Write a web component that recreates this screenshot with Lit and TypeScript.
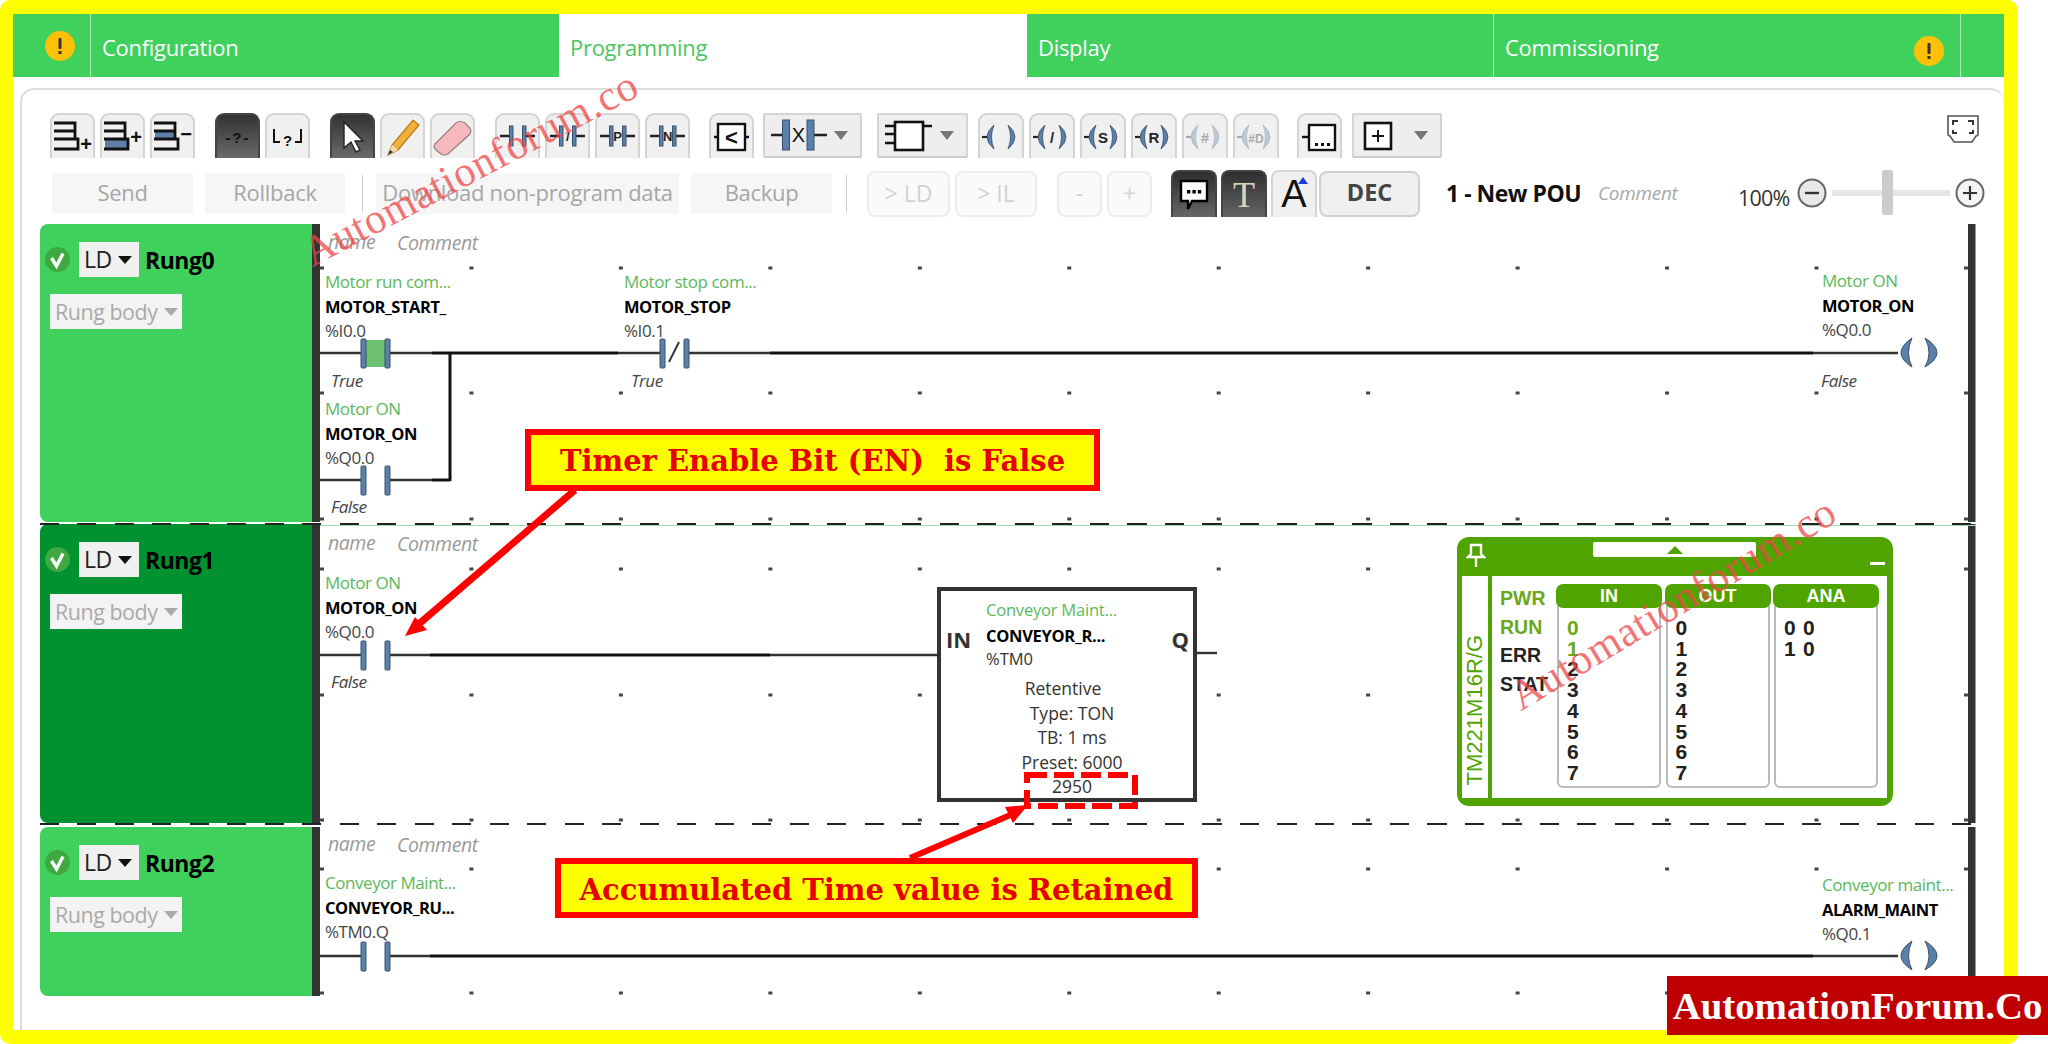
import { LitElement, css, html, svg } from "lit";
import { customElement, property } from "lit/decorators.js";

const X0 = 320;
const BLUE = "#5b80aa";
const EDGE = "#3c5068";

type Label = { x: number; y: number; text: string; cls: string };
type Seg = [number, number, number, number, boolean?];
type Part = { kind: "contact" | "closed" | "nc" | "coil"; x: number; wire: number };
type RungData = {
  name: string;
  dark?: boolean;
  top: number;
  height: number;
  gap: number;
  dots: number[];
  wires: Seg[];
  parts: Part[];
  labels: Label[];
};

// text block above an element on the ladder: comment, symbol, address
const tag = (x: number, y: number, c: string, s: string, a: string): Label[] => [
  { x, y, text: c, cls: "cmt" },
  { x, y: y + 25, text: s, cls: "sym" },
  { x, y: y + 49, text: a, cls: "adr" },
];

const meta = (y: number): Label[] => [
  { x: 328, y, text: "name", cls: "meta" },
  { x: 397, y: y + 1, text: "Comment", cls: "meta" },
];

const RUNGS: RungData[] = [
  {
    name: "Rung0",
    top: 224,
    height: 298,
    gap: 2,
    dots: [268, 393, 519],
    wires: [
      [320, 353, 361, 353],
      [390, 353, 432, 353],
      [432, 353, 618, 353, true],
      [618, 353, 660, 353],
      [688, 353, 770, 353],
      [770, 353, 1813, 353, true],
      [1813, 353, 1898, 353],
      [320, 480, 361, 480],
      [390, 480, 432, 480],
      [432, 480, 450, 480, true],
      [450, 353, 450, 481, true],
    ],
    parts: [
      { kind: "closed", x: 361, wire: 353 },
      { kind: "nc", x: 660, wire: 353 },
      { kind: "contact", x: 361, wire: 480 },
      { kind: "coil", x: 1898, wire: 353 },
    ],
    labels: [
      ...meta(242),
      ...tag(325, 282, "Motor run com...", "MOTOR_START_", "%I0.0"),
      ...tag(624, 282, "Motor stop com...", "MOTOR_STOP", "%I0.1"),
      ...tag(325, 409, "Motor ON", "MOTOR_ON", "%Q0.0"),
      ...tag(1822, 281, "Motor ON", "MOTOR_ON", "%Q0.0"),
      { x: 331, y: 381, text: "True", cls: "val" },
      { x: 631, y: 381, text: "True", cls: "val" },
      { x: 331, y: 507, text: "False", cls: "val" },
      { x: 1821, y: 381, text: "False", cls: "val" },
    ],
  },
  {
    name: "Rung1",
    dark: true,
    top: 524,
    height: 299,
    gap: 4,
    dots: [569, 695, 820],
    wires: [
      [320, 655, 361, 655],
      [390, 655, 430, 655],
      [430, 655, 770, 655, true],
      [770, 655, 937, 655],
      [1197, 653, 1217, 653],
    ],
    parts: [{ kind: "contact", x: 361, wire: 655 }],
    labels: [
      ...meta(543),
      ...tag(325, 583, "Motor ON", "MOTOR_ON", "%Q0.0"),
      { x: 331, y: 682, text: "False", cls: "val" },
    ],
  },
  {
    name: "Rung2",
    top: 827,
    height: 169,
    gap: 0,
    dots: [869, 993],
    wires: [
      [320, 956, 361, 956],
      [390, 956, 430, 956],
      [430, 956, 1813, 956, true],
      [1813, 956, 1898, 956],
    ],
    parts: [
      { kind: "contact", x: 361, wire: 956 },
      { kind: "coil", x: 1898, wire: 956 },
    ],
    labels: [
      ...meta(844),
      ...tag(325, 883, "Conveyor Maint...", "CONVEYOR_RU...", "%TM0.Q"),
      ...tag(1822, 885, "Conveyor maint...", "ALARM_MAINT", "%Q0.1"),
    ],
  },
];

@customElement("ld-rung")
export class LdRung extends LitElement {
  @property({ attribute: false }) data!: RungData;

  renderPart(p: Part) {
    const y = p.wire;
    if (p.kind === "coil") {
      return svg`
        <path d="M${p.x + 14} ${y - 15} Q${p.x - 8} ${y} ${p.x + 14} ${y + 14} Q${p.x + 7} ${y} ${p.x + 14} ${y - 15}Z" fill=${BLUE} stroke=${EDGE} stroke-width="1"/>
        <path d="M${p.x + 27} ${y - 15} Q${p.x + 51} ${y} ${p.x + 27} ${y + 14} Q${p.x + 35} ${y} ${p.x + 27} ${y - 15}Z" fill=${BLUE} stroke=${EDGE} stroke-width="1"/>`;
    }
    return svg`
      ${p.kind === "closed" ? svg`<rect x=${p.x + 4} y=${y - 13} width="22" height="27" fill="#6cc070"/>` : ""}
      <rect x=${p.x} y=${y - 14} width="5" height="29" rx="1" fill=${BLUE} stroke=${EDGE} stroke-width="1"/>
      <rect x=${p.x + 24} y=${y - 14} width="5" height="29" rx="1" fill=${BLUE} stroke=${EDGE} stroke-width="1"/>
      ${p.kind === "nc" ? svg`<path d="M${p.x + 9} ${y + 9} L${p.x + 19} ${y - 11}" stroke="#333" stroke-width="2"/>` : ""}`;
  }

  render() {
    const d = this.data;
    const dotXs = Array.from({ length: 12 }, (_, i) => X0 + i * 149.45);
    return html`
      <div class="rung ${d.dark ? "dark" : ""}" style="height:${d.height}px;margin-bottom:${d.gap}px">
        <div class="head">
          <div class="top-line">
            <svg class="ok" width="25" height="25" viewBox="0 0 25 25">
              <circle cx="12.5" cy="12.5" r="12.5" fill="#3fa83f"/>
              <path d="M6.5 11 L11.5 19 L18 6.5" fill="none" stroke="#fff" stroke-width="3.4"/>
            </svg>
            <div class="ld">LD<span class="caret black"></span></div>
            <b class="rname">${d.name}</b>
          </div>
          <div class="body-sel">Rung body<span class="caret"></span></div>
        </div>
        <div class="rail"></div>
        <div class="canvas">
          <svg class="ink" width="1648" height=${d.height} viewBox="${X0} ${d.top} 1648 ${d.height}">
            ${d.dots.map((y) => dotXs.map((x) => svg`<rect x=${x} y=${y - 1.5} width="4" height="3" fill="#444"/>`))}
            ${d.wires.map(
              ([a, b, c, e, strong]) =>
                svg`<line x1=${a} y1=${b} x2=${c} y2=${e} stroke=${strong ? "#111" : "#333"} stroke-width=${strong ? 3 : 2.4}/>`
            )}
            ${d.parts.map((p) => this.renderPart(p))}
          </svg>
          ${d.labels.map(
            (l) => html`<div class="lbl ${l.cls}" style="left:${l.x - X0}px;top:${l.y - d.top - 11}px">${l.text}</div>`
          )}
          <slot></slot>
        </div>
        <div class="rail end"></div>
      </div>
    `;
  }

  static styles = css`
    :host { display: block; }
    .rung { display: flex; }
    .head {
      width: 272px;
      box-sizing: border-box;
      background: #40d05c;
      border-radius: 8px 0 0 8px;
      padding: 18px 0 0 4px;
    }
    .dark .head { background: #009130; }
    .top-line { display: flex; align-items: center; height: 35px; }
    .ok { margin-left: 1px; }
    .ld {
      margin-left: 9px;
      width: 60px;
      height: 35px;
      box-sizing: border-box;
      padding-left: 5px;
      background: #f0f0f0;
      font: 23px/35px "Open Sans", sans-serif;
      letter-spacing: -0.6px;
      color: #222;
      display: flex;
      align-items: center;
      gap: 6px;
    }
    .rname { margin-left: 6px; font: 700 23px "Open Sans", sans-serif; letter-spacing: -0.5px; color: #000; }
    .body-sel {
      margin: 17px 0 0 6px;
      width: 132px;
      height: 35px;
      box-sizing: border-box;
      padding-left: 5px;
      background: #f3f3f3;
      color: #aaa;
      font: 21.5px/35px "Open Sans", sans-serif;
      letter-spacing: -0.5px;
      display: flex;
      align-items: center;
      gap: 7px;
      white-space: nowrap;
    }
    .caret { width: 0; height: 0; flex: none; border: 7px solid transparent; border-top: 8px solid #aaa; border-bottom: 0; }
    .caret.black { border-top-color: #111; }
    .rail { width: 8px; background: #333; flex: none; box-sizing: border-box; }
    .rail.end { border-right: 1px solid #40d05c; }
    .canvas { position: relative; flex: 1; height: 100%; }
    .ink { position: absolute; left: 0; top: 0; }
    .lbl { position: absolute; font: 17px/22px "Open Sans", sans-serif; white-space: nowrap; letter-spacing: -0.45px; }
    .cmt { color: #5cb85c; }
    .sym { color: #000; font-weight: 700; font-size: 16.5px; }
    .adr { color: #444; }
    .val { color: #444; font-style: italic; }
    .meta { color: #9a9a9a; font-style: italic; font-size: 19.5px; }
  `;
}

@customElement("plc-widget")
export class PlcWidget extends LitElement {
  render() {
    const digits = [0, 1, 2, 3, 4, 5, 6, 7];
    return html`
      <div class="w-head">
        <svg class="pin" width="20" height="26" viewBox="0 0 20 26">
          <path d="M5 2h10v9l3 3H2l3-3Z M10 14v10" fill="none" stroke="#fff" stroke-width="2.4"/>
        </svg>
        <div class="pill"><span class="tri"></span></div>
        <div class="minus"></div>
      </div>
      <div class="w-body">
        <div class="side"><span>TM221M16R/G</span></div>
        <div class="main">
          <div class="leds">
            <span class="on">PWR</span><span class="on">RUN</span><span>ERR</span><span>STAT</span>
          </div>
          <div class="col">
            <div class="cap">IN</div>
            <div class="box">${digits.map((d) => html`<div class=${d < 2 ? "on" : ""}>${d}</div>`)}</div>
          </div>
          <div class="col">
            <div class="cap">OUT</div>
            <div class="box">${digits.map((d) => html`<div>${d}</div>`)}</div>
          </div>
          <div class="col">
            <div class="cap">ANA</div>
            <div class="box pairs"><div>0&nbsp;0</div><div>1&nbsp;0</div></div>
          </div>
        </div>
      </div>
    `;
  }

  static styles = css`
    :host {
      position: absolute;
      left: 1457px;
      top: 537px;
      width: 436px;
      height: 269px;
      box-sizing: border-box;
      background: #50a400;
      border-radius: 12px;
      padding: 0 6px 8px 5px;
      display: flex;
      flex-direction: column;
      font-family: "Liberation Sans", sans-serif;
    }
    .w-head { position: relative; height: 39px; flex: none; }
    .pin { position: absolute; left: 4px; top: 6px; }
    .pill {
      position: absolute;
      left: 131px;
      top: 5px;
      width: 163px;
      height: 15px;
      background: #fff;
      border-radius: 2px;
      display: flex;
      justify-content: center;
      align-items: center;
    }
    .tri { width: 0; height: 0; border: 8px solid transparent; border-bottom: 8px solid #50a400; border-top: 0; }
    .minus { position: absolute; right: 2px; top: 25px; width: 15px; height: 2.5px; background: #fff; }
    .w-body { flex: 1; display: flex; gap: 4px; }
    .side { width: 26px; background: #fff; display: flex; align-items: flex-end; justify-content: center; }
    .side span {
      writing-mode: vertical-rl;
      transform: rotate(180deg);
      color: #50a400;
      font-size: 22px;
      margin-bottom: 13px;
      line-height: 26px;
    }
    .main { flex: 1; background: #fff; display: flex; gap: 2.5px; padding: 8px 6px 10px 8px; }
    .leds { width: 53.5px; flex: none; display: flex; flex-direction: column; font: 700 19.5px/28.5px "Liberation Sans", sans-serif; color: #222; white-space: nowrap; }
    .on { color: #6aa81c; }
    .col { width: 106px; flex: none; display: flex; flex-direction: column; position: relative; }
    .cap {
      height: 24px;
      background: #50a400;
      color: #fff;
      border-radius: 7px;
      text-align: center;
      font: 700 18px/24px "Liberation Sans", sans-serif;
      position: relative;
    }
    .box {
      flex: 1;
      margin: -2px 1px 0;
      border: 2px solid #bbb;
      border-top: 0;
      border-radius: 0 0 6px 6px;
      padding: 12px 0 0 8px;
      font: 700 21px/20.7px "Liberation Sans", sans-serif;
      color: #222;
    }
    .pairs { word-spacing: 1.5px; }
  `;
}

const rungGlyph = (row: number, sign: string, signY: number) => svg`
  ${row === 1 ? svg`<rect x="5" y="18" width="20" height="7" fill=${BLUE}/>` : ""}
  ${row === 2 ? svg`<rect x="5" y="26" width="22" height="9" fill=${BLUE}/>` : ""}
  <path d="M4 9H25V25M4 17H25M4 25H28V35H4" fill="none" stroke="#111" stroke-width="2.8"/>
  <text x="36" y=${signY} text-anchor="middle" font-family="Liberation Sans" font-weight="700" font-size="20" fill="#111">${sign}</text>`;

const contactGlyph = (mark: string) => svg`
  <path d="M5 22H15M31 22H40" stroke="#222" stroke-width="2.4"/>
  <rect x="14.500" y="12" width="3.500" height="20" fill=${BLUE} stroke=${EDGE}/>
  <rect x="27.500" y="12" width="3.500" height="20" fill=${BLUE} stroke=${EDGE}/>
  <text x="22.700" y="27" text-anchor="middle" font-family="Liberation Sans" font-weight="700" font-size="13" fill="#222">${mark}</text>`;

const coilGlyph = (mark: string, faded = false) => svg`
  <g opacity=${faded ? 0.35 : 1}>
    <path d="M4 23H10" stroke="#222" stroke-width="2.2"/>
    <path d="M16 11Q2 23 16 35Q11 23 16 11Z M30 11Q44 23 30 35Q35 23 30 11Z" fill=${BLUE} stroke=${EDGE} stroke-width="0.8"/>
    <text x="23" y="29" text-anchor="middle" font-family="Liberation Sans" font-weight="700" font-size=${mark.length > 1 ? 12 : 15} fill="#222">${mark}</text>
  </g>`;

type Tool = { w: number; icon: unknown; dark?: boolean; caret?: boolean; gap?: string };

const TOOLS: Tool[] = [
  { w: 45, icon: rungGlyph(0, "+", 37) },
  { w: 45, icon: rungGlyph(2, "+", 30) },
  { w: 45, icon: rungGlyph(1, "−", 27) },
  { w: 45, dark: true, gap: "g20", icon: svg`<text x="22" y="29" text-anchor="middle" font-family="Liberation Mono" font-weight="700" font-size="15" fill="#111">-?-</text>` },
  { w: 45, icon: svg`<path d="M9 15V28H15M36 15V28H30" fill="none" stroke="#111" stroke-width="2"/><text x="22.500" y="32" text-anchor="middle" font-family="Liberation Sans" font-weight="700" font-size="15" fill="#111">?</text>` },
  { w: 45, dark: true, gap: "g20", icon: svg`<path d="M14 8V34L21 28L26 38L30 36L25 27H33Z" fill="#fff" stroke="#222" stroke-width="1.4"/>` },
  { w: 45, icon: svg`<path d="M8 41L12 31L33 6L39 11L18 36Z" fill="#f0b03c" stroke="#b57a18" stroke-width="1.2"/><path d="M8 41L12 31L18 36Z" fill="#f4dcb0"/><path d="M8 41L10 36L13 38Z" fill="#333"/>` },
  { w: 45, icon: svg`<path d="M5 30L26 9Q30 6 35 9L40 14Q42 18 39 21L18 40Q14 42 11 40L6 36Q3 33 5 30Z" fill="#f6b9bc" stroke="#9a7a7a" stroke-width="1.2"/>` },
  { w: 45, gap: "g20", icon: contactGlyph("") },
  { w: 45, icon: contactGlyph("/") },
  { w: 45, icon: contactGlyph("P") },
  { w: 45, icon: contactGlyph("N") },
  { w: 45, gap: "g19", icon: svg`<rect x="9" y="10" width="27" height="26" fill="#fff" stroke="#111" stroke-width="2.4"/><path d="M5 23H9M36 23H40" stroke="#111" stroke-width="2.4"/><text x="22.500" y="31" text-anchor="middle" font-family="Liberation Sans" font-weight="700" font-size="22" fill="#111">&lt;</text>` },
  { w: 99, gap: "g9", caret: true, icon: svg`<path d="M8 22H20M50 22H64" stroke="#222" stroke-width="2.6"/><rect x="19.500" y="7" width="7" height="30" fill=${BLUE} stroke=${EDGE}/><rect x="44" y="7" width="7" height="30" fill=${BLUE} stroke=${EDGE}/><text x="35.500" y="29" text-anchor="middle" font-family="Liberation Sans" font-size="20" fill="#111">X</text>` },
  { w: 91, gap: "g15", caret: true, icon: svg`<rect x="18" y="9" width="28" height="28" fill="#fff" stroke="#111" stroke-width="2.6"/><path d="M8 13H18M8 21H18M8 30H18M46 13H55" stroke="#111" stroke-width="2.6"/>` },
  { w: 46, gap: "g10", icon: coilGlyph("") },
  { w: 46, icon: coilGlyph("/") },
  { w: 46, icon: coilGlyph("S") },
  { w: 46, icon: coilGlyph("R") },
  { w: 46, icon: coilGlyph("#", true) },
  { w: 46, icon: coilGlyph("#D", true) },
  { w: 45, gap: "g18", icon: svg`<rect x="12" y="11" width="26" height="25" fill="#fff" stroke="#111" stroke-width="2.4"/><path d="M5 23H12" stroke="#111" stroke-width="2.4"/><path d="M18 29h3v3h-3zM24 29h3v3h-3zM30 29h3v3h-3z" fill="#111"/>` },
  { w: 90, gap: "g10", caret: true, icon: svg`<rect x="13" y="10" width="26" height="26" fill="#fff" stroke="#111" stroke-width="2.6"/><path d="M26 17V29M20 23H32" stroke="#111" stroke-width="2"/>` },
];

@customElement("app-root")
export class AppRoot extends LitElement {
  warn() {
    return html`<svg class="warn" width="30" height="30" viewBox="0 0 30 30">
      <circle cx="15" cy="15" r="15" fill="#ffc107"/>
      <rect x="13.500" y="7" width="3" height="11" rx="1" fill="#333"/>
      <rect x="13.500" y="20" width="3" height="3" fill="#333"/>
    </svg>`;
  }

  renderTool(t: Tool) {
    return html`<div class="tool ${t.dark ? "dark" : ""} ${t.caret ? "wide" : ""} ${t.gap ?? ""}" style="width:${t.w}px">
      <svg width=${t.caret ? t.w - 30 : t.w} height="45" viewBox="0 0 ${t.caret ? t.w - 30 : t.w} 45">${t.icon}</svg>
      ${t.caret ? html`<span class="t-caret"></span>` : ""}
    </div>`;
  }

  render() {
    return html`
      <div class="frame">
        <nav class="tabs">
          <div class="tab-warn">${this.warn()}</div>
          <div class="tab first">Configuration</div>
          <div class="tab active">Programming</div>
          <div class="tab mid">Display</div>
          <div class="tab last">Commissioning ${this.warn()}</div>
          <div class="tab-end"></div>
        </nav>
        <section class="panel">
          <div class="tools">
            ${TOOLS.map((t) => this.renderTool(t))}
            <svg class="full" width="32" height="28" viewBox="0 0 32 28">
              <path d="M1 1H31V19Q31 21 29 21L25 27H7L3 21Q1 21 1 19Z" fill="none" stroke="#555" stroke-width="1.6"/>
              <path d="M6 10V6H11M21 6H26V10M6 15V18H10M26 15V18H22" fill="none" stroke="#333" stroke-width="2"/>
            </svg>
          </div>
          <div class="actions">
            <div class="act w141">Send</div>
            <div class="act w140 m12">Rollback</div>
            <div class="sep s1"></div>
            <div class="act w303">Download non-program data</div>
            <div class="act w141 m12">Backup</div>
            <div class="sep s2"></div>
            <div class="ghost w83">&gt; LD</div>
            <div class="ghost w82 m5">&gt; IL</div>
            <div class="ghost w45 m20">-</div>
            <div class="ghost w45 m5">+</div>
            <div class="tog dark m19">
              <svg width="32" height="34" viewBox="0 0 32 34">
                <path d="M3 3H29V23H14L10 31V23H3Z" fill="#fff" stroke="#000" stroke-width="2.4"/>
                <path d="M9 12h3.4v3.4H9zM14.400 12h3.4v3.400h-3.400zM19.800 12h3.4v3.400h-3.400z" fill="#000"/>
              </svg>
            </div>
            <div class="tog dark m4 serif-t">T</div>
            <div class="tog m4 big-a">A<span class="a-tri"></span></div>
            <div class="dec">DEC</div>
            <div class="pou">1 - New POU</div>
            <div class="pou-c">Comment</div>
            <div class="pct">100%</div>
            <svg class="zoom" width="30" height="30" viewBox="0 0 30 30">
              <circle cx="15" cy="15" r="13.500" fill="#e8e8e8" stroke="#666" stroke-width="2"/><path d="M8 15H22" stroke="#333" stroke-width="2.4"/>
            </svg>
            <div class="slider"><div class="thumb"></div></div>
            <svg class="zoom" width="30" height="30" viewBox="0 0 30 30">
              <circle cx="15" cy="15" r="13.500" fill="#f4f4f4" stroke="#666" stroke-width="2"/><path d="M8 15H22M15 8V22" stroke="#333" stroke-width="2.2"/>
            </svg>
          </div>
          <div class="rungs">
            <ld-rung .data=${RUNGS[0]}></ld-rung>
            <ld-rung .data=${RUNGS[1]}>
              <div class="timer">
                <div class="pin-l">IN</div>
                <div class="pin-r">Q</div>
                <div class="t-cmt">Conveyor Maint...</div>
                <div class="t-sym">CONVEYOR_R...</div>
                <div class="t-adr">%TM0</div>
                <div class="t-p first-p">Retentive</div>
                <div class="t-p">Type: TON</div>
                <div class="t-p">TB: 1 ms</div>
                <div class="t-p">Preset: 6000</div>
                <div class="t-p">2950</div>
              </div>
            </ld-rung>
            <ld-rung .data=${RUNGS[2]}></ld-rung>
          </div>
        </section>
      </div>

      <div class="dash d1"></div>
      <div class="dash d2"></div>
      <div class="hair"></div>
      <plc-widget></plc-widget>

      <svg class="over" width="2048" height="1044" viewBox="0 0 2048 1044">
        <line x1="575" y1="490" x2="420" y2="623" stroke="#f00" stroke-width="7"/>
        <polygon points="405,636 415,617 427,630" fill="#f00"/>
        <line x1="910" y1="858" x2="1015" y2="813" stroke="#f00" stroke-width="6"/>
        <polygon points="1028,805 1005,807 1013,823" fill="#f00"/>
        <rect x="1027" y="775" width="108" height="31" fill="none" stroke="#f00" stroke-width="6" stroke-dasharray="20 7"/>
      </svg>
      <div class="call c1">Timer Enable Bit (EN)  is False</div>
      <div class="call c2">Accumulated Time value is Retained</div>
      <div class="mark m1">Automationforum.co</div>
      <div class="mark m2">Automationforum.co</div>
      <div class="brand">AutomationForum.Co</div>
    `;
  }

  static styles = css`
    :host {
      display: block;
      position: relative;
      width: 2048px;
      height: 1044px;
      overflow: hidden;
      background: #fff;
      font-family: "Open Sans", sans-serif;
    }
    .frame {
      width: 2018px;
      height: 1044px;
      box-sizing: border-box;
      border: solid #ffff00;
      border-width: 14px 14px 14px 13px;
      border-radius: 10px;
      background: #fff;
      display: flex;
      flex-direction: column;
    }
    .tabs { display: flex; height: 63px; flex: none; background: #40d05c; color: #fff; font-size: 22px; letter-spacing: -0.3px; }
    .tab-warn { width: 78px; display: flex; align-items: center; justify-content: center; padding: 0 0 0 16px; box-sizing: border-box; border-right: 1.5px solid #a8eab6; }
    .tab { box-sizing: border-box; display: flex; align-items: center; padding: 3px 0 0 11px; }
    .first { width: 468px; }
    .active { width: 468px; background: #fff; color: #4cc563; }
    .mid { width: 467px; border-right: 1.5px solid #a8eab6; }
    .last { width: 467px; border-right: 1.5px solid #a8eab6; position: relative; }
    .last .warn { position: absolute; right: 16px; top: 22px; }
    .tab-end { flex: 1; }
    .panel {
      flex: 1;
      margin: 11px 0 0 7px;
      border: solid #ddd;
      border-width: 2px 0 0 2px;
      border-radius: 14px 14px 0 0;
      padding: 23px 0 0 28px;
      display: flex;
      flex-direction: column;
      position: relative;
    }
    .tools { display: flex; gap: 5px; height: 45px; }
    .tool {
      box-sizing: border-box;
      height: 45px;
      flex: none;
      background: #f0f0f0;
      border: 2px solid #d4d4d4;
      border-bottom: 0;
      border-radius: 9px 9px 0 0;
      display: flex;
      align-items: center;
      position: relative;
    }
    .tool svg { margin: -2px; flex: none; }
    .tool.wide { border-bottom: 2px solid #ccc; border-radius: 2px; background: #eee; }
    .tool.dark { background: linear-gradient(#333, #6a6a6a); border-color: #444; }
    .t-caret { margin-left: 4px; width: 0; height: 0; border: 7px solid transparent; border-top: 9px solid #777; border-bottom: 0; }
    .g9 { margin-left: 4px; }
    .g10 { margin-left: 5px; }
    .g15 { margin-left: 10px; }
    .g18 { margin-left: 13px; }
    .g19 { margin-left: 14px; }
    .g20 { margin-left: 15px; }
    .full { position: absolute; left: 1925px; top: 25px; }
    .actions { display: flex; align-items: center; height: 47px; margin: 12px 0 0 2px; }
    .act { height: 41px; background: #f6f6f6; color: #a6a6a6; font-size: 22px; letter-spacing: -0.3px; display: flex; align-items: center; justify-content: center; flex: none; padding-bottom: 3px; box-sizing: border-box; white-space: nowrap; }
    .w141 { width: 141px; }
    .w140 { width: 140px; }
    .w303 { width: 303px; }
    .w83 { width: 83px; }
    .w82 { width: 82px; }
    .w45 { width: 45px; }
    .m4 { margin-left: 4px; }
    .m5 { margin-left: 5px; }
    .m12 { margin-left: 12px; }
    .m19 { margin-left: 19px; }
    .m20 { margin-left: 20px; }
    .sep { width: 1px; height: 38px; background: #ccc; flex: none; }
    .s1 { margin: 0 13px 0 17px; }
    .s2 { margin: 0 20px 0 14px; }
    .ghost { box-sizing: border-box; height: 46px; padding-bottom: 2px; border: 2px solid #ececec; border-radius: 8px; background: #fafafa; color: #d2d2d2; font-size: 23px; display: flex; align-items: center; justify-content: center; flex: none; }
    .tog { box-sizing: border-box; width: 46px; height: 47px; flex: none; display: flex; align-items: center; justify-content: center; background: #f0f0f0; border: 2px solid #d4d4d4; border-bottom: 0; border-radius: 8px 8px 0 0; position: relative; }
    .tog.dark { background: linear-gradient(#2e2e2e, #666); border-color: #444; }
    .serif-t { font: 36px "Liberation Serif", serif; color: #e2d2b4; text-shadow: 1px 0 0 #2b4a6a; }
    .big-a { font: 38px "Liberation Sans", sans-serif; color: #111; }
    .a-tri { position: absolute; right: 7px; top: 5px; width: 0; height: 0; border: 5px solid transparent; border-bottom: 7px solid #1a3fd0; border-top: 0; }
    .dec { box-sizing: border-box; width: 101px; height: 46px; padding-bottom: 4px; margin-left: 2px; flex: none; border: 2px solid #d0d0d0; border-radius: 8px; background: #f0f0f0; color: #444; font: 700 23.5px "Open Sans", sans-serif; display: flex; align-items: center; justify-content: center; }
    .pou { margin: -2px 0 0 26px; width: 152px; flex: none; font-weight: 700; font-size: 23px; letter-spacing: -0.5px; color: #111; white-space: nowrap; }
    .pou-c { width: 140px; flex: none; font-style: italic; font-size: 19px; color: #a8a8a8; letter-spacing: -0.3px; margin-top: -2px; }
    .pct { width: 59px; flex: none; font-size: 21.5px; letter-spacing: -0.8px; color: #333; margin-top: 8px; white-space: nowrap; }
    .zoom { flex: none; margin-bottom: 2px; }
    .slider { width: 118px; height: 6px; margin: 0 5px 2px; flex: none; background: #e6e6e6; position: relative; }
    .thumb { position: absolute; left: 50px; top: -20px; width: 11px; height: 45px; background: #ccc; border-radius: 2px; }
    .rungs { margin: 7px 0 0 -10px; width: 1936px; }
    .dash { position: absolute; left: 40px; width: 1936px; height: 2px; background: repeating-linear-gradient(90deg, #222 0 19px, transparent 19px 37.500px); }
    .d1 { top: 523px; }
    .d2 { top: 823px; }
    .hair { position: absolute; left: 320px; top: 525px; width: 1656px; height: 1px; background: #9fdcae; }
    .timer {
      position: absolute;
      left: 617px;
      top: 63px;
      width: 260px;
      height: 215px;
      box-sizing: border-box;
      border: 4px solid #333;
      background: #fff;
      padding: 6px 0 0 45px;
      color: #333;
      font-size: 16.5px;
      line-height: 24.500px;
      white-space: nowrap;
    }
    .pin-l, .pin-r { position: absolute; top: 36px; font: 700 22px/24px "Open Sans", sans-serif; color: #333; }
    .pin-l { left: 5px; }
    .pin-r { right: 4px; }
    .t-cmt { color: #5cb85c; line-height: 26px; letter-spacing: -0.2px; }
    .t-sym { color: #000; font-weight: 700; line-height: 25px; letter-spacing: -0.3px; }
    .t-adr { line-height: 22px; }
    .t-p { margin-left: -45px; padding-left: 10px; text-align: center; font-size: 17.5px; }
    .first-p { margin-top: 6px; padding-right: 8px; padding-left: 0; }
    .over { position: absolute; left: 0; top: 0; pointer-events: none; }
    .call {
      position: absolute;
      box-sizing: border-box;
      background: #ffff00;
      border: 6px solid #f00;
      color: #e60000;
      font: 700 29px "DejaVu Serif", serif;
      display: flex;
      align-items: center;
      justify-content: center;
      white-space: pre;
    }
    .c1 { left: 525px; top: 429px; width: 575px; height: 62px; padding-top: 2px; }
    .c2 { left: 555px; top: 858px; width: 643px; height: 60px; padding-top: 4px; }
    .mark {
      position: absolute;
      font: 42.500px "Liberation Serif", serif;
      letter-spacing: 0.8px;
      color: rgba(238, 70, 70, 0.75);
      white-space: nowrap;
      transform-origin: 0 100%;
    }
    .m1 { left: 317px; top: 227px; transform: rotate(-27.700deg); }
    .m2 { left: 1526px; top: 671px; transform: rotate(-31deg); }
    .brand {
      position: absolute;
      left: 1667px;
      top: 976px;
      width: 381px;
      height: 59px;
      background: #c00000;
      color: #fff;
      font: 700 38.800px/59px "Liberation Serif", serif;
      text-align: center;
      white-space: nowrap;
    }
  `;
}
